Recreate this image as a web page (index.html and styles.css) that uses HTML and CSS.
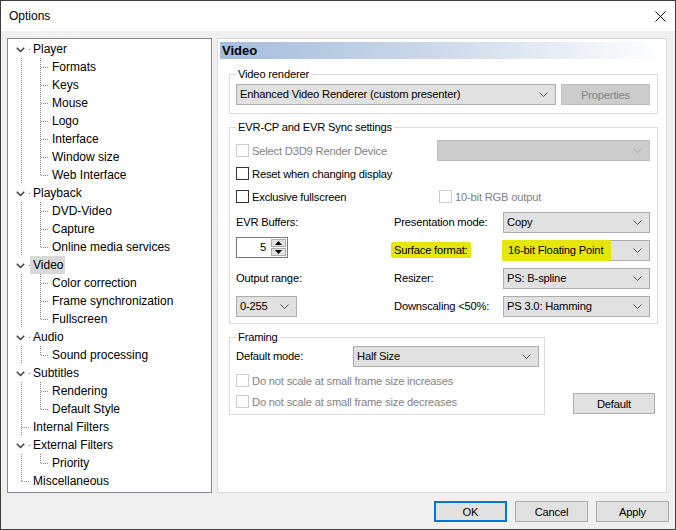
FILE: index.html
```html
<!DOCTYPE html>
<html>
<head>
<meta charset="utf-8">
<title>Options</title>
<link rel="stylesheet" href="styles.css">
</head>
<body>
<div class="window">
  <div class="titlebar">
    <span class="title">Options</span>
    <svg class="close" width="11" height="11" viewBox="0 0 11 11"><path d="M0.5 0.5 L10.5 10.5 M10.5 0.5 L0.5 10.5" stroke="#111" stroke-width="1" fill="none"/></svg>
  </div>
  <div class="main">
    <div class="tree">
      <div class="row"><span class="c1 exp"><svg class="tw" width="9" height="6" viewBox="0 0 9 6"><path d="M0.8 0.8 L4.5 4.5 L8.2 0.8" stroke="#3a3a3a" stroke-width="1.4" fill="none"/></svg></span><span class="lbl">Player</span></div>
      <div class="row"><span class="c1 pass"></span><span class="c2 mid2"></span><span class="lbl">Formats</span></div>
      <div class="row"><span class="c1 pass"></span><span class="c2 mid2"></span><span class="lbl">Keys</span></div>
      <div class="row"><span class="c1 pass"></span><span class="c2 mid2"></span><span class="lbl">Mouse</span></div>
      <div class="row"><span class="c1 pass"></span><span class="c2 mid2"></span><span class="lbl">Logo</span></div>
      <div class="row"><span class="c1 pass"></span><span class="c2 mid2"></span><span class="lbl">Interface</span></div>
      <div class="row"><span class="c1 pass"></span><span class="c2 mid2"></span><span class="lbl">Window size</span></div>
      <div class="row"><span class="c1 pass"></span><span class="c2 end2"></span><span class="lbl">Web Interface</span></div>
      <div class="row"><span class="c1 exp"><svg class="tw" width="9" height="6" viewBox="0 0 9 6"><path d="M0.8 0.8 L4.5 4.5 L8.2 0.8" stroke="#3a3a3a" stroke-width="1.4" fill="none"/></svg></span><span class="lbl">Playback</span></div>
      <div class="row"><span class="c1 pass"></span><span class="c2 mid2"></span><span class="lbl">DVD-Video</span></div>
      <div class="row"><span class="c1 pass"></span><span class="c2 mid2"></span><span class="lbl">Capture</span></div>
      <div class="row"><span class="c1 pass"></span><span class="c2 end2"></span><span class="lbl">Online media services</span></div>
      <div class="row"><span class="c1 exp"><svg class="tw" width="9" height="6" viewBox="0 0 9 6"><path d="M0.8 0.8 L4.5 4.5 L8.2 0.8" stroke="#3a3a3a" stroke-width="1.4" fill="none"/></svg></span><span class="lbl sel">Video</span></div>
      <div class="row"><span class="c1 pass"></span><span class="c2 mid2"></span><span class="lbl">Color correction</span></div>
      <div class="row"><span class="c1 pass"></span><span class="c2 mid2"></span><span class="lbl">Frame synchronization</span></div>
      <div class="row"><span class="c1 pass"></span><span class="c2 end2"></span><span class="lbl">Fullscreen</span></div>
      <div class="row"><span class="c1 exp"><svg class="tw" width="9" height="6" viewBox="0 0 9 6"><path d="M0.8 0.8 L4.5 4.5 L8.2 0.8" stroke="#3a3a3a" stroke-width="1.4" fill="none"/></svg></span><span class="lbl">Audio</span></div>
      <div class="row"><span class="c1 pass"></span><span class="c2 end2"></span><span class="lbl">Sound processing</span></div>
      <div class="row"><span class="c1 exp"><svg class="tw" width="9" height="6" viewBox="0 0 9 6"><path d="M0.8 0.8 L4.5 4.5 L8.2 0.8" stroke="#3a3a3a" stroke-width="1.4" fill="none"/></svg></span><span class="lbl">Subtitles</span></div>
      <div class="row"><span class="c1 pass"></span><span class="c2 mid2"></span><span class="lbl">Rendering</span></div>
      <div class="row"><span class="c1 pass"></span><span class="c2 end2"></span><span class="lbl">Default Style</span></div>
      <div class="row"><span class="c1 mid"></span><span class="lbl">Internal Filters</span></div>
      <div class="row"><span class="c1 exp"><svg class="tw" width="9" height="6" viewBox="0 0 9 6"><path d="M0.8 0.8 L4.5 4.5 L8.2 0.8" stroke="#3a3a3a" stroke-width="1.4" fill="none"/></svg></span><span class="lbl">External Filters</span></div>
      <div class="row"><span class="c1 pass"></span><span class="c2 end2"></span><span class="lbl">Priority</span></div>
      <div class="row"><span class="c1 end"></span><span class="lbl">Miscellaneous</span></div>
    </div>

    <div class="panel">
      <div class="page-title">Video</div>

      <fieldset class="group g-renderer">
        <legend>Video renderer</legend>
        <div class="line">
          <div class="combo w-renderer"><span class="val">Enhanced Video Renderer (custom presenter)</span><svg class="dd" width="9" height="5" viewBox="0 0 9 5"><path d="M0.5 0.5 L4.5 4.5 L8.5 0.5" stroke="#555" fill="none"/></svg></div>
          <div class="btn disabled w-props">Properties</div>
        </div>
      </fieldset>

      <fieldset class="group g-evr">
        <legend>EVR-CP and EVR Sync settings</legend>
        <div class="line">
          <span class="chk disabled"></span><span class="ctext disabled">Select D3D9 Render Device</span>
          <div class="combo disabled w-d3d"><span class="val"></span><svg class="dd" width="9" height="5" viewBox="0 0 9 5"><path d="M0.5 0.5 L4.5 4.5 L8.5 0.5" stroke="#a8a8a8" fill="none"/></svg></div>
        </div>
        <div class="line gap2">
          <span class="chk"></span><span class="ctext">Reset when changing display</span>
        </div>
        <div class="line gap2">
          <div class="check-cell"><span class="chk"></span><span class="ctext">Exclusive fullscreen</span></div>
          <span class="chk disabled"></span><span class="ctext disabled">10-bit RGB output</span>
        </div>
        <div class="evr-grid">
          <span class="lab">EVR Buffers:</span>
          <span class="lab">Presentation mode:</span>
          <div class="combo w-std"><span class="val">Copy</span><svg class="dd" width="9" height="5" viewBox="0 0 9 5"><path d="M0.5 0.5 L4.5 4.5 L8.5 0.5" stroke="#555" fill="none"/></svg></div>

          <div class="spin">
            <span class="spin-val">5</span>
            <span class="spin-btns">
              <span class="sb"><svg width="7" height="4" viewBox="0 0 7 4"><path d="M0 4 L3.5 0 L7 4 Z" fill="#000"/></svg></span>
              <span class="sb"><svg width="7" height="4" viewBox="0 0 7 4"><path d="M0 0 L3.5 4 L7 0 Z" fill="#000"/></svg></span>
            </span>
          </div>
          <span class="lab"><span class="hl">Surface format:</span></span>
          <div class="combo w-std"><span class="val hl-in">16-bit Floating Point</span><svg class="dd" width="9" height="5" viewBox="0 0 9 5"><path d="M0.5 0.5 L4.5 4.5 L8.5 0.5" stroke="#555" fill="none"/></svg></div>

          <span class="lab">Output range:</span>
          <span class="lab">Resizer:</span>
          <div class="combo w-std"><span class="val">PS: B-spline</span><svg class="dd" width="9" height="5" viewBox="0 0 9 5"><path d="M0.5 0.5 L4.5 4.5 L8.5 0.5" stroke="#555" fill="none"/></svg></div>

          <div class="combo w-range"><span class="val">0-255</span><svg class="dd" width="9" height="5" viewBox="0 0 9 5"><path d="M0.5 0.5 L4.5 4.5 L8.5 0.5" stroke="#555" fill="none"/></svg></div>
          <span class="lab">Downscaling &lt;50%:</span>
          <div class="combo w-std"><span class="val">PS 3.0: Hamming</span><svg class="dd" width="9" height="5" viewBox="0 0 9 5"><path d="M0.5 0.5 L4.5 4.5 L8.5 0.5" stroke="#555" fill="none"/></svg></div>
        </div>
      </fieldset>

      <div class="bottom-row">
        <fieldset class="group g-framing">
          <legend>Framing</legend>
          <div class="line">
            <span class="lab mode-lab">Default mode:</span>
            <div class="combo w-mode"><span class="val">Half Size</span><svg class="dd" width="9" height="5" viewBox="0 0 9 5"><path d="M0.5 0.5 L4.5 4.5 L8.5 0.5" stroke="#555" fill="none"/></svg></div>
          </div>
          <div class="line gap3">
            <span class="chk disabled"></span><span class="ctext disabled">Do not scale at small frame size increases</span>
          </div>
          <div class="line">
            <span class="chk disabled"></span><span class="ctext disabled">Do not scale at small frame size decreases</span>
          </div>
        </fieldset>
        <div class="btn w-default">Default</div>
      </div>
    </div>
  </div>
  <div class="buttons">
    <div class="btn ok">OK</div>
    <div class="btn">Cancel</div>
    <div class="btn">Apply</div>
  </div>
</div>
</body>
</html>
```

FILE: styles.css
```css
html, body {
  margin: 0;
  padding: 0;
}
body {
  font-family: "Liberation Sans", Arial, sans-serif;
  font-size: 12px;
  color: #000;
  background: #f0f0f0;
}
.window {
  width: 676px;
  height: 530px;
  box-sizing: border-box;
  border: 1px solid #3f3f3f;
  background: #f0f0f0;
  display: flex;
  flex-direction: column;
}
.titlebar {
  flex: none;
  height: 30px;
  background: #fff;
  display: flex;
  align-items: center;
  padding-left: 8px;
}
.title {
  font-size: 12px;
  line-height: 15px;
}
.close {
  margin-left: auto;
  margin-right: 9px;
}
.main {
  display: flex;
  padding: 7px 0 0 6px;
}

/* tree */
.tree {
  width: 205px;
  height: 455px;
  box-sizing: border-box;
  border: 1px solid #828790;
  background: #fff;
  padding: 1px 0 0 4px;
}
.row {
  display: flex;
  height: 18px;
  align-items: center;
}
.c1 {
  flex: none;
  width: 18px;
  height: 18px;
  display: flex;
  align-items: center;
}
.c2 {
  flex: none;
  width: 19px;
  height: 18px;
}
.pass {
  background: repeating-linear-gradient(to bottom, #8a8a8a 0 1px, transparent 1px 2px) 9px 0 / 1px 18px no-repeat;
}
.mid {
  background:
    repeating-linear-gradient(to bottom, #8a8a8a 0 1px, transparent 1px 2px) 9px 0 / 1px 18px no-repeat,
    repeating-linear-gradient(to right, #8a8a8a 0 1px, transparent 1px 2px) 10px 9px / 8px 1px no-repeat;
}
.end {
  background:
    repeating-linear-gradient(to bottom, #8a8a8a 0 1px, transparent 1px 2px) 9px 0 / 1px 9px no-repeat,
    repeating-linear-gradient(to right, #8a8a8a 0 1px, transparent 1px 2px) 10px 9px / 8px 1px no-repeat;
}
.mid2 {
  background:
    repeating-linear-gradient(to bottom, #8a8a8a 0 1px, transparent 1px 2px) 10px 0 / 1px 18px no-repeat,
    repeating-linear-gradient(to right, #8a8a8a 0 1px, transparent 1px 2px) 11px 9px / 8px 1px no-repeat;
}
.end2 {
  background:
    repeating-linear-gradient(to bottom, #8a8a8a 0 1px, transparent 1px 2px) 10px 0 / 1px 9px no-repeat,
    repeating-linear-gradient(to right, #8a8a8a 0 1px, transparent 1px 2px) 11px 9px / 8px 1px no-repeat;
}
.exp {
  background: linear-gradient(#8a8a8a, #8a8a8a) 17px 9px / 1px 1px no-repeat;
}
.tw {
  margin-left: 4px;
  margin-top: 1px;
  display: block;
}
.lbl {
  height: 18px;
  line-height: 18px;
  padding: 0 2px 0 3px;
  white-space: nowrap;
}
.lbl.sel {
  background: #d9d9d9;
}

/* panel */
.panel {
  margin-left: 5px;
  width: 450px;
  height: 455px;
  box-sizing: border-box;
  border: 1px solid #d9d9d9;
  background: #fff;
  padding: 3px 3px 0 2px;
  font-size: 11.2px;
  letter-spacing: -0.2px;
}
.page-title {
  height: 17px;
  line-height: 17px;
  font-size: 13px;
  font-weight: bold;
  letter-spacing: 0;
  padding-left: 2px;
  background: linear-gradient(to right, #a4bcdb 0%, #c9d7e9 45%, #ffffff 100%);
}
.group {
  margin: 0 0 0 9px;
  border: 1px solid #dcdcdc;
  min-inline-size: 0;
  box-sizing: border-box;
}
.group legend {
  padding: 0 2px;
  margin-left: 0;
  line-height: 15px;
  height: 15px;
}
.g-renderer {
  width: 429px;
  margin-top: 8px;
  padding: 2px 7px 8px 6px;
}
.g-evr {
  width: 429px;
  margin-top: 6px;
  padding: 5px 7px 6px 6px;
}
.g-framing {
  width: 316px;
  margin-top: 6px;
  padding: 1px 5px 2px 6px;
}
.line {
  display: flex;
  align-items: center;
  height: 21px;
}
.gap2 {
  margin-top: 2px;
}
.gap3 {
  margin-top: 3px;
}

/* combo */
.combo {
  box-sizing: border-box;
  height: 21px;
  border: 1px solid #adadad;
  background: #e1e1e1;
  display: flex;
  align-items: center;
  padding: 0 7px 0 3px;
  white-space: nowrap;
}
.combo .val {
  flex: 1;
  line-height: 15px;
}
.combo.disabled {
  background: #cccccc;
  border-color: #bfbfbf;
}
.dd {
  flex: none;
  display: block;
}
.w-renderer { width: 320px; }
.w-d3d { width: 213px; margin-left: auto; }
.w-std { width: 147px; }
.w-range { width: 61px; }
.w-mode { width: 186px; }

/* button */
.btn {
  box-sizing: border-box;
  height: 21px;
  border: 1px solid #adadad;
  background: #e1e1e1;
  display: flex;
  align-items: center;
  justify-content: center;
  width: 73px;
}
.btn.disabled {
  background: #cccccc;
  border-color: #bfbfbf;
  color: #838383;
}
.w-props {
  width: 89px;
  margin-left: 5px;
}
.w-default {
  width: 82px;
  margin-left: 28px;
  margin-bottom: 1px;
  align-self: flex-end;
}
.btn.ok {
  border: 2px solid #0078d7;
}

/* checkbox */
.chk {
  flex: none;
  width: 13px;
  height: 13px;
  box-sizing: border-box;
  border: 1px solid #333;
  background: #fff;
}
.chk.disabled {
  border-color: #cccccc;
}
.ctext {
  margin-left: 3px;
  white-space: nowrap;
}
.ctext.disabled {
  color: #838383;
}
.check-cell {
  width: 203px;
  display: flex;
  align-items: center;
}

/* grid */
.evr-grid {
  margin-top: 5px;
  display: grid;
  grid-template-columns: 158px 109px 147px;
  grid-template-rows: repeat(4, 21px);
  row-gap: 7px;
  align-items: center;
}
.lab {
  white-space: nowrap;
  line-height: 15px;
}
.hl {
  background: #e6e60a;
  padding: 2px 4px 2px 3px;
  margin-left: -3px;
  border-radius: 2px;
}
.hl-in {
  flex: 0 0 auto !important;
  background: #e6e60a;
  padding: 3px 8px 3px 6px;
  margin-left: -5px;
  margin-right: auto;
  border-radius: 2px;
}
.spin {
  align-self: start;
  margin-top: -3px;
  width: 52px;
  height: 21px;
  box-sizing: border-box;
  border: 1px solid #7a7a7a;
  background: #fff;
  display: flex;
}
.spin-val {
  flex: 1;
  text-align: right;
  padding-right: 5px;
  line-height: 19px;
}
.spin-btns {
  width: 16px;
  display: flex;
  flex-direction: column;
  padding: 1px 1px 1px 0;
  box-sizing: border-box;
  gap: 1px;
}
.sb {
  flex: 1;
  border: 1px solid #adadad;
  background: #e1e1e1;
  display: flex;
  align-items: center;
  justify-content: center;
}
.sb svg {
  display: block;
}

.bottom-row {
  display: flex;
  align-items: flex-end;
}
.mode-lab {
  width: 117px;
}

.buttons {
  display: flex;
  justify-content: flex-end;
  gap: 8px;
  margin-top: 8px;
  padding-right: 6px;
  font-size: 11.2px;
  letter-spacing: -0.2px;
}
```
